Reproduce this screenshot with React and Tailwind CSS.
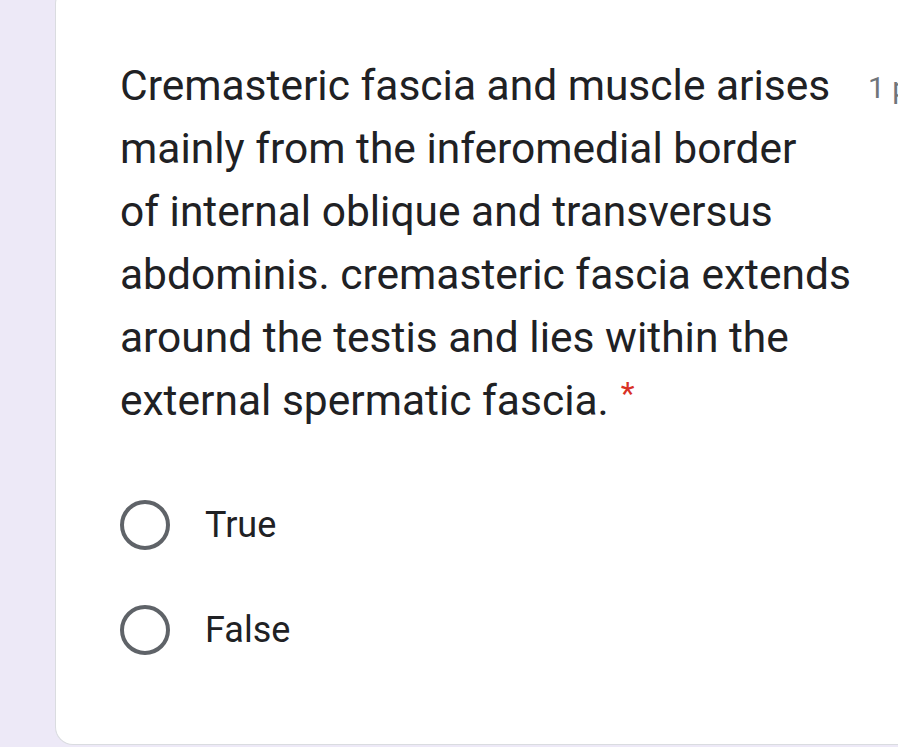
import React from 'react';

const options = ['True', 'False'];

const App = () => {
  return (
    <div className="flex h-[747px] w-[898px] overflow-hidden bg-[#ede9f7]" style={{ fontFamily: 'Roboto, sans-serif' }}>
      <div className="-mt-[14px] mb-[2px] ml-[55px] flex-1 rounded-l-[18px] border border-r-0 border-[#dadce0] bg-white">
        <div className="flex pl-[64px] pt-[67px]">
          <p className="w-[740px] shrink-0 text-[42.5px] leading-[63px] text-[#202124]">
            Cremasteric fascia and muscle arises mainly from the inferomedial border
            <br />
            of internal oblique and transversus abdominis. cremasteric fascia extends around the testis and lies within the external spermatic fascia.
            <span className="ml-[12px] align-top text-[32px] leading-[48px] text-[#d93025]">*</span>
          </p>
          <span className="ml-[8px] whitespace-nowrap pt-[2px] text-[30px] leading-[63px] text-[#70757a]">1 point</span>
        </div>

        <div className="mt-[68px] flex flex-col gap-[55px] pl-[64px]">
          {options.map((opt) => (
            <label key={opt} className="flex items-center gap-[35px]">
              <span className="h-[50px] w-[50px] rounded-full border-[4px] border-[#5f6368]" />
              <span className="text-[36px] leading-[50px] text-[#202124]">{opt}</span>
            </label>
          ))}
        </div>
      </div>
    </div>
  );
};

export default App;
